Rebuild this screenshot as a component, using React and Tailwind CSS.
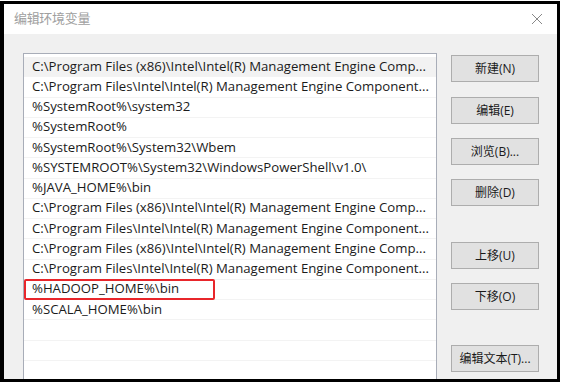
const paths = [
  "C:\\Program Files (x86)\\Intel\\Intel(R) Management Engine Comp...",
  "C:\\Program Files\\Intel\\Intel(R) Management Engine Component...",
  "%SystemRoot%\\system32",
  "%SystemRoot%",
  "%SystemRoot%\\System32\\Wbem",
  "%SYSTEMROOT%\\System32\\WindowsPowerShell\\v1.0\\",
  "%JAVA_HOME%\\bin",
  "C:\\Program Files (x86)\\Intel\\Intel(R) Management Engine Comp...",
  "C:\\Program Files\\Intel\\Intel(R) Management Engine Component...",
  "C:\\Program Files (x86)\\Intel\\Intel(R) Management Engine Comp...",
  "C:\\Program Files\\Intel\\Intel(R) Management Engine Component...",
  "%HADOOP_HOME%\\bin",
  "%SCALA_HOME%\\bin",
  "",
  "",
  "",
];

function Btn({ label, className = "" }) {
  return (
    <button
      className={
        "w-[88px] h-[27px] bg-[#e1e1e1] border border-[#adadad] text-[12px] text-[#1a1a1a] flex items-center justify-center " +
        className
      }
    >
      {label}
    </button>
  );
}

export default function App() {
  return (
    <div
      className="w-[565px] h-[390px] bg-white overflow-hidden pt-px"
      style={{ fontFamily: '"Open Sans", "Noto Sans CJK SC", sans-serif' }}
    >
      <div className="w-[560px] h-[381px] border-[3px] border-l-4 border-black flex flex-col overflow-hidden">
        {/* title bar */}
        <div className="h-[30px] shrink-0 bg-white flex items-center justify-between pl-[10px] pr-[14px]">
          <span className="text-[13px] text-[#a0a0a0] tracking-tight">编辑环境变量</span>
          <svg width="12" height="12" viewBox="0 0 12 12" className="text-[#888]">
            <path d="M1 1L11 11M11 1L1 11" stroke="currentColor" strokeWidth="1" />
          </svg>
        </div>

        {/* body */}
        <div className="flex-1 bg-[#f0f0f0] flex pl-[19px] pt-[19px] gap-[14px]">
          <div className="w-[414px] h-[400px] bg-white border border-[#a8adb8] pt-[3px] shrink-0">
            {paths.map((p, i) => (
              <div
                key={i}
                className={
                  "relative h-[20.25px] flex items-center pl-[8px] text-[13.2px] text-[#1b1b1b] border-b border-[#f3f3f3] whitespace-nowrap " +
                  (i === 0 ? "bg-[#f2f2f2]" : "")
                }
              >
                {p}
                {i === 11 && (
                  <div className="absolute left-0 top-[-1px] w-[191px] h-[21px] border-2 border-[#e8262b] rounded-[2px]" />
                )}
              </div>
            ))}
          </div>

          <div className="flex flex-col pt-[2px]">
            <Btn label="新建(N)" />
            <Btn label="编辑(E)" className="mt-[15px]" />
            <Btn label="浏览(B)..." className="mt-[14px]" />
            <Btn label="删除(D)" className="mt-[14px]" />
            <Btn label="上移(U)" className="mt-[36px]" />
            <Btn label="下移(O)" className="mt-[14px]" />
            <Btn label="编辑文本(T)..." className="mt-[35px]" />
          </div>
        </div>
      </div>
    </div>
  );
}
